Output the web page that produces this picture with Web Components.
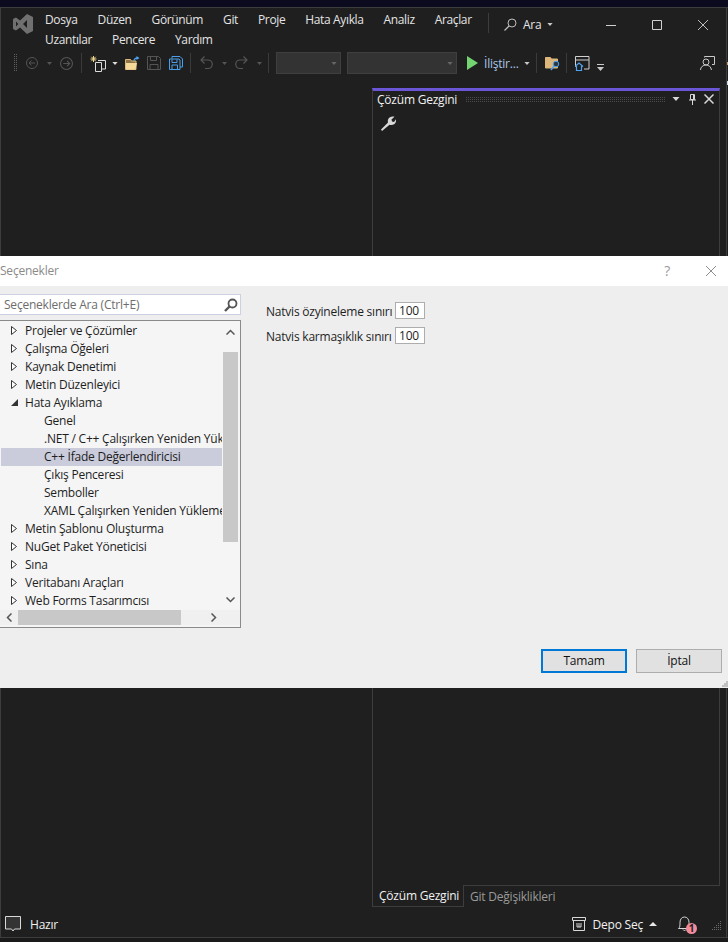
<!DOCTYPE html>
<html lang="tr">
<head>
<meta charset="utf-8">
<title>Seçenekler</title>
<style>
  html, body { margin: 0; padding: 0; background: #1f1f1f; }
  body { width: 728px; height: 942px; overflow: hidden; font: 12px "Open Sans", "Noto Sans", sans-serif; letter-spacing: -0.22px; }
</style>
</head>
<body>
<vs-app>
  <vs-titlebar slot="top"></vs-titlebar>
  <vs-toolbar slot="top"></vs-toolbar>
  <vs-solution-panel slot="main"></vs-solution-panel>
  <vs-statusbar slot="bottom"></vs-statusbar>
  <vs-options-dialog slot="over">
    <vs-tree-item kind="closed">Projeler ve Çözümler</vs-tree-item>
    <vs-tree-item kind="closed">Çalışma Öğeleri</vs-tree-item>
    <vs-tree-item kind="closed">Kaynak Denetimi</vs-tree-item>
    <vs-tree-item kind="closed">Metin Düzenleyici</vs-tree-item>
    <vs-tree-item kind="open">Hata Ayıklama</vs-tree-item>
    <vs-tree-item>Genel</vs-tree-item>
    <vs-tree-item>.NET / C++ Çalışırken Yeniden Yükleme</vs-tree-item>
    <vs-tree-item selected>C++ İfade Değerlendiricisi</vs-tree-item>
    <vs-tree-item>Çıkış Penceresi</vs-tree-item>
    <vs-tree-item>Semboller</vs-tree-item>
    <vs-tree-item>XAML Çalışırken Yeniden Yükleme</vs-tree-item>
    <vs-tree-item kind="closed">Metin Şablonu Oluşturma</vs-tree-item>
    <vs-tree-item kind="closed">NuGet Paket Yöneticisi</vs-tree-item>
    <vs-tree-item kind="closed">Sına</vs-tree-item>
    <vs-tree-item kind="closed">Veritabanı Araçları</vs-tree-item>
    <vs-tree-item kind="closed">Web Forms Tasarımcısı</vs-tree-item>
  </vs-options-dialog>
</vs-app>

<script>
// Small helper so every component gets an open shadow root with its markup
class VsBase extends HTMLElement {
  constructor() {
    super();
    this.attachShadow({ mode: "open" });
    this.shadowRoot.innerHTML = this.render();
  }
  render() {
    return "";
  }
}

const caret = (fill = "#c8c8c8", w = 7, h = 4) =>
  `<svg width="${w}" height="${h}" viewBox="0 0 7 4"><path d="M0 0h7L3.5 4z" fill="${fill}"/></svg>`;

class VsApp extends VsBase {
  render() {
    return `
      <style>
        :host {
          display: flex;
          flex-direction: column;
          position: relative;
          width: 728px;
          height: 942px;
          box-sizing: border-box;
          background: #1f1f1f;
          color: #f1f1f1;
        }
        .strip { height: 7px; background: #0b0a1e; border-bottom: 1px solid #3d3d3d; flex: none; }
        .frame {
          flex: 1;
          min-height: 0;
          display: flex;
          flex-direction: column;
          border-left: 1px solid #3d3d3d;
          border-right: 1px solid #3d3d3d;
          margin-right: 1px;
        }
        .main { flex: 1; min-height: 0; display: flex; justify-content: flex-end; padding-right: 6px; }
        .edge { height: 4px; border-top: 1px solid #3d3d3d; background: #1a1a1a; flex: none; }
        /* scraps of whatever is behind the window, at the very edge */
        .scrap { position: absolute; left: 727px; width: 1px; }
      </style>
      <div class="strip"></div>
      <div class="frame">
        <slot name="top"></slot>
        <div class="main"><slot name="main"></slot></div>
        <slot name="bottom"></slot>
      </div>
      <div class="edge"></div>
      <i class="scrap" style="top:62px;height:3px;background:#c9a070"></i>
      <i class="scrap" style="top:81px;height:4px;background:#cdd8e6"></i>
      <slot name="over"></slot>
    `;
  }
}

class VsTitlebar extends VsBase {
  render() {
    const menu = ["Dosya", "Düzen", "Görünüm", "Git", "Proje", "Hata Ayıkla", "Analiz", "Araçlar",
      "Uzantılar", "Pencere", "Yardım"];
    return `
      <style>
        :host { display: flex; height: 44px; align-items: flex-start; font-size: 12px; }
        .logo { margin: 6px 0 0 12px; width: 20px; height: 20px; flex: none; }
        nav {
          margin: 2px 0 0 12px;
          width: 443px;
          display: flex;
          flex-wrap: wrap;
          column-gap: 20px;
          flex: none;
          letter-spacing: -0.36px;
        }
        nav span { height: 20px; line-height: 20px; color: #e4e4e4; }
        .sep { width: 1px; height: 20px; background: #3d3d3d; margin: 5px 15px 0 0; flex: none; }
        .search { display: flex; align-items: center; height: 20px; margin-top: 6px; color: #e4e4e4; flex: none; }
        .search svg:first-child { margin-right: 6px; }
        .search span { margin-right: 5px; }
        .ctl { margin-left: auto; display: flex; margin-top: 12px; margin-right: 18px; gap: 36px; }
      </style>
      <svg class="logo" viewBox="0 0 20 20"><path fill="#707070" fill-rule="evenodd" d="M14 0l6 3v14l-6 3-7-6.6L3 16.5l-3-1.6v-9.800l3-1.600 4 3.100zM3 7.500v5l2.300-2.500zM14 6l-4 4 4 4z"/></svg>
      <nav>${menu.map((m) => `<span>${m}</span>`).join("")}</nav>
      <div class="sep"></div>
      <div class="search">
        <svg width="13" height="13" viewBox="0 0 13 13" fill="none" stroke="#bdbdbd"><circle cx="8" cy="5" r="4"/><path d="M5 8l-4.500 4.500" stroke-width="1.300"/></svg>
        <span>Ara</span>${caret("#c8c8c8", 6, 3)}
      </div>
      <div class="ctl">
        <svg width="10" height="10" viewBox="0 0 10 10"><path d="M0 5.500h10" stroke="#d0d0d0"/></svg>
        <svg width="10" height="10" viewBox="0 0 10 10"><path d="M.5.500h9v9h-9z" fill="none" stroke="#d0d0d0"/></svg>
        <svg width="10" height="10" viewBox="0 0 10 10"><path d="M0 0l10 10M10 0L0 10" stroke="#d0d0d0" stroke-width=".9"/></svg>
      </div>
    `;
  }
}

class VsToolbar extends VsBase {
  render() {
    const gap = (w) => `<span style="width:${w}px;flex:none"></span>`;
    return `
      <style>
        :host { display: flex; align-items: center; height: 22px; padding-left: 12px; }
        .grip { width: 5px; height: 18px; margin-right: 8px; flex: none;
          background: conic-gradient(#5e5e5e 25%, transparent 0) 0 0 / 2px 2px; }
        .sep { width: 1px; height: 20px; background: #3a3a3a; flex: none; }
        svg { flex: none; display: block; }
        .combo { height: 22px; box-sizing: border-box; background: #333; border: 1px solid #3f3f3f;
          display: flex; align-items: center; justify-content: flex-end; padding-right: 3px; flex: none; }
        .attach { color: #a9c8e8; font-size: 12px; flex: none; width: 35px; white-space: nowrap; }
        .r { margin-left: auto; margin-right: 11px; }
      </style>
      <div class="grip"></div>
      <svg width="12" height="12" viewBox="0 0 12 12" fill="none" stroke="#555"><circle cx="6" cy="6" r="5.500"/><path d="M9 6H3.500M5.500 3.500L3 6l2.500 2.500"/></svg>
      ${gap(9)}${caret("#555", 5, 3)}${gap(8)}
      <svg width="13" height="13" viewBox="0 0 12 12" fill="none" stroke="#555"><circle cx="6" cy="6" r="5.500"/><path d="M3 6h5.500M6.500 3.500L9 6 6.500 8.500"/></svg>
      ${gap(8)}<div class="sep"></div>${gap(8)}
      <svg width="17" height="17" viewBox="0 0 17 17" fill="none"><path d="M8 5.500h7.500v8.500h-3.500M5.500 7.500h6v9h-6z" stroke="#dcdcdc"/><path d="M3.500 1v6M.5 4h6M1.300 1.800l4.400 4.400M5.700 1.800L1.300 6.200" stroke="#f0d78c"/></svg>
      ${gap(5)}${caret("#dcdcdc", 6, 3)}${gap(7)}
      <svg width="15" height="14" viewBox="0 0 15 14"><path d="M.5 3.500h5l1 1.500H11v8.500H.5z" fill="#8f7446" stroke="#dcb67a"/><path d="M1 7h11l-1.500 6.500H1z" fill="#f5d89a"/><path d="M9 5c0-2 1.500-3 3.500-3" stroke="#4fa3f0" fill="none" stroke-width="1.300"/><path d="M11.500 0l3 2-3 2z" fill="#4fa3f0"/></svg>
      ${gap(7)}
      <svg width="14" height="14" viewBox="0 0 14 14" fill="none" stroke="#555"><path d="M.5.500h11l2 2v11H.5z"/><path d="M3.500.5v4h6v-4M3 13.500v-5h8v5"/></svg>
      ${gap(8)}
      <svg width="14" height="14" viewBox="0 0 14 14" fill="none" stroke="#4b9fea"><path d="M3 2.500V.5h8l2.500 2.500v8H11"/><path d="M.5 3H10l1 1v9.500H.5z"/><path d="M3 3.500v3h5v-3M3 13v-4h5.500v4"/></svg>
      ${gap(7)}<div class="sep"></div>${gap(9)}
      <svg width="13" height="14" viewBox="0 0 13 14" fill="none" stroke="#555" stroke-width="1.200"><path d="M4.500.500L1 4l3.500 3.500M1 4h7a4 4 0 0 1 0 8.500H5"/></svg>
      ${gap(9)}${caret("#555", 5, 3)}${gap(8)}
      <svg width="13" height="14" viewBox="0 0 13 14" fill="none" stroke="#555" stroke-width="1.200"><path d="M8.500.500L12 4 8.500 7.500M12 4H5a4 4 0 0 0 0 8.500h3"/></svg>
      ${gap(9)}${caret("#555", 5, 3)}${gap(6)}
      <div class="sep"></div>${gap(7)}
      <div class="combo" style="width:65px">${caret("#666", 6, 3)}</div>
      ${gap(6)}
      <div class="combo" style="width:110px">${caret("#666", 6, 3)}</div>
      ${gap(10)}
      <svg width="11" height="14" viewBox="0 0 11 14"><path d="M0 0l11 7-11 7z" fill="#72d572"/></svg>
      ${gap(6)}<span class="attach">İliştir...</span>
      ${gap(5)}${caret("#c8c8c8", 6, 3)}${gap(6)}
      <div class="sep"></div>${gap(8)}
      <svg width="15" height="15" viewBox="0 0 15 15"><path d="M.5 1.500h5l1 1.500h6v9h-12z" fill="#dcb67a" stroke="#dcb67a"/><circle cx="11" cy="8" r="2.800" fill="#2a3744" stroke="#4fa3f0"/><path d="M9 10l-3 4" stroke="#4fa3f0" stroke-width="1.400"/></svg>
      ${gap(6)}<div class="sep"></div>${gap(8)}
      <svg width="15" height="15" viewBox="0 0 15 15" fill="none"><path d="M.5 11V.5h13.500v12.500H9M.5 4h13.500" stroke="#d0d0d0"/><path d="M0 10.500L4 7l4 3.500M1.500 10v4.500h5V10" stroke="#4fa3f0" stroke-width="1.200"/></svg>
      ${gap(7)}
      <svg width="7" height="7" viewBox="0 0 7 7" style="margin-top:8px"><path d="M0 .5h7" stroke="#c8c8c8"/><path d="M0 3h7L3.500 7z" fill="#c8c8c8"/></svg>
      <svg class="r" width="15" height="15" viewBox="0 0 15 15" fill="none" stroke="#c8c8c8"><circle cx="6" cy="6" r="3"/><path d="M.5 14c0-3 2.500-5 5.500-5s5 2 5.500 5M4.500 1.500V.5h10v8H12"/></svg>
    `;
  }
}

class VsSolutionPanel extends VsBase {
  render() {
    return `
      <style>
        :host { display: flex; flex-direction: column; width: 348px; padding-top: 14px; box-sizing: border-box; color: #f1f1f1; }
        .pane { flex: 1; border: 1px solid #3d3d3d; border-top: 3px solid #6a56d6; box-sizing: border-box; }
        .head { display: flex; align-items: center; height: 16px; padding: 0 5px 0 4px; }
        .dots { flex: 1; height: 5px; margin: 0 7px 0 8px;
          background: conic-gradient(#4b4b4b 25%, transparent 0) 0 0 / 2px 2px; }
        .icons { display: flex; align-items: center; }
        .wrench { display: block; margin: 9px 0 0 8px; }
        .tabs { display: flex; height: 21px; flex: none; }
        .tab { padding: 0 4px; line-height: 21px; height: 21px; box-sizing: border-box; }
        .on { border: 1px solid #3d3d3d; border-top: none; width: 92px; background: #1f1f1f; margin-top: -1px; height: 22px; line-height: 22px; white-space: nowrap; padding-left: 6px; }
        .off { color: #9a9a9a; padding-left: 6px; }
      </style>
      <div class="pane">
        <div class="head">
          <span>Çözüm Gezgini</span>
          <div class="dots"></div>
          <div class="icons">
            ${caret("#d8d8d8", 8, 4)}
            <svg width="7" height="11" viewBox="0 0 7 11" style="margin:0 8px 0 9px"><path d="M1.500.5h4v5h-4zM0 6h7M3.500 6v5M4.500 1v4" stroke="#d8d8d8" fill="none"/></svg>
            <svg width="10" height="10" viewBox="0 0 10 10"><path d="M.5.500l9 9M9.500.5l-9 9" stroke="#d8d8d8" stroke-width="1.500"/></svg>
          </div>
        </div>
        <svg class="wrench" width="15" height="16" viewBox="0 0 15 16"><path d="M1 15l-1-1.500 7-7c-.5-2 0-4 2-5.300C10.500.3 12 .2 13.500.8L10.500 3.500l.5 2 2 .6 2-2.800c.3 2-.3 3.500-1.500 4.700-1.400 1.100-3.200 1.300-5 .8z" fill="#d8d8d8"/></svg>
      </div>
      <div class="tabs">
        <div class="tab on">Çözüm Gezgini</div>
        <div class="tab off">Git Değişiklikleri</div>
      </div>
    `;
  }
}

class VsStatusbar extends VsBase {
  render() {
    return `
      <style>
        :host { display: flex; align-items: center; height: 30px; flex: none; box-sizing: border-box; padding: 4px 5px 0 4px; color: #f1f1f1; }
        .msg { margin-left: 9px; }
        .right { margin-left: auto; display: flex; align-items: center; }
        .bell { position: relative; margin-left: 21px; width: 24px; height: 16px; }
        .badge {
          position: absolute; left: 8px; top: 7px; width: 11px; height: 11px; border-radius: 50%;
          background: #f28b9b; color: #1f1f1f; font: bold 10px/11px "Open Sans", sans-serif; text-align: center;
        }
        .grip { margin-left: 10px; width: 9px; height: 9px; margin-top: 3px; }
      </style>
      <svg width="16" height="16" viewBox="0 0 16 16"><path d="M.5.500h15v12.500H9.500L8 15 6.500 13H.5z" fill="#333" stroke="#d8d8d8"/></svg>
      <span class="msg">Hazır</span>
      <div class="right">
        <svg width="14" height="14" viewBox="0 0 14 14" fill="none" stroke="#d8d8d8" style="margin-right:7px"><path d="M.5.500h13v3H.5zM1.500 3.500v10h11v-10M5 6v4h4V6M7 6v4"/></svg>
        <span>Depo Seç</span>
        <svg width="8" height="4" viewBox="0 0 8 4" style="margin-left:6px"><path d="M0 4h8L4 0z" fill="#e8e8e8"/></svg>
        <div class="bell">
          <svg width="13" height="16" viewBox="0 0 13 16" fill="none" stroke="#d8d8d8"><path d="M.5 12.500c1.500-1 1.500-3 1.500-6C2 3 4 1 6.500 1S11 3 11 6.500c0 3 0 5 1.500 6zM5 13.500c.5 1.300 2.500 1.300 3 0"/></svg>
          <span class="badge">1</span>
        </div>
        <svg class="grip" viewBox="0 0 9 9"><path d="M8 0h1v1H8zM6 2h1v1H6zM8 2h1v1H8zM4 4h1v1H4zM6 4h1v1H6zM8 4h1v1H8zM2 6h1v1H2zM4 6h1v1H4zM6 6h1v1H6zM8 6h1v1H8zM0 8h1v1H0zM2 8h1v1H2zM4 8h1v1H4zM6 8h1v1H6zM8 8h1v1H8z" fill="#6a6a6a"/></svg>
      </div>
    `;
  }
}

class VsTreeItem extends VsBase {
  render() {
    const kind = this.getAttribute("kind");
    const sel = this.hasAttribute("selected");
    let arrow = "";
    if (kind === "closed") {
      arrow = `<svg width="6" height="9" viewBox="0 0 6 9"><path d="M.5.500l5 4-5 4z" fill="#fff" stroke="#333"/></svg>`;
    } else if (kind === "open") {
      arrow = `<svg width="7" height="7" viewBox="0 0 7 7"><path d="M7 0v7H0z" fill="#333"/></svg>`;
    }
    return `
      <style>
        :host { display: block; height: 18px; }
        .row {
          height: 18px;
          box-sizing: border-box;
          padding-bottom: 1px;
          display: flex;
          align-items: center;
          white-space: nowrap;
          overflow: hidden;
          color: #1e1e1e;
          background: ${sel ? "#cacbdb" : "transparent"};
          padding-left: ${kind ? 10 : 43}px;
        }
        .a { width: 14px; display: flex; flex: none; }
      </style>
      <div class="row">${kind ? `<span class="a">${arrow}</span>` : ""}<slot></slot></div>
    `;
  }
}

class VsOptionsDialog extends VsBase {
  render() {
    return `
      <style>
        /* the dialog floats over the IDE window */
        :host {
          position: absolute;
          left: 0;
          top: 256px;
          width: 728px;
          height: 432px;
          display: flex;
          flex-direction: column;
          background: #eeeeee;
          color: #1e1e1e;
          font-size: 12px;
        }
        .title { height: 30px; box-sizing: border-box; padding-bottom: 1px; background: #fff; display: flex; align-items: center; color: #8a8a8a; flex: none; }
        .q { margin-left: auto; margin-right: 36px; font-size: 14px; color: #9a9a9a; }
        .x { margin-right: 12px; }
        .body { flex: 1; min-height: 0; display: flex; padding-top: 8px; }
        .left { width: 241px; flex: none; display: flex; flex-direction: column; gap: 5px; }
        .find {
          height: 21px; box-sizing: border-box; background: #fff; border: 1px solid #ccd0e0; border-left: none;
          display: flex; align-items: center; justify-content: space-between; padding: 0 2px 0 4px; color: #6d6d6d;
        }
        .tree {
          height: 308px; box-sizing: border-box; border: 1px solid #8a8a8a; border-left: none;
          background: #f5f5f5; display: grid; grid-template-columns: 222px 18px; grid-template-rows: 289px 17px;
        }
        .items { padding-top: 1px; padding-left: 1px; overflow: hidden; grid-column: 1; grid-row: 1; }
        .vs { grid-column: 2; grid-row: 1; display: flex; flex-direction: column; align-items: center; justify-content: space-between; padding: 0 2px 0 1px; }
        .vs .btn, .hs .btn { flex: none; display: flex; align-items: center; justify-content: center; }
        .vs .btn { height: 22px; width: 15px; }
        .vs .thumb { width: 15px; height: 190px; background: #c8c8c8; margin-bottom: 42px; flex: none; }
        .hs { grid-column: 1 / 3; grid-row: 2; display: flex; align-items: center; height: 15px; background: #f0f0f0; }
        .hs .btn { width: 18px; height: 15px; }
        .hs .thumb { width: 163px; height: 15px; background: #c8c8c8; }
        .hs .end { margin-left: auto; margin-right: 17px; }
        .content { flex: 1; padding: 8px 0 0 25px; position: relative; }
        .field { display: flex; align-items: center; height: 17px; margin-bottom: 8px; }
        .field label { width: 129px; white-space: nowrap; padding-top: 2px; }
        .field .val { width: 30px; height: 17px; box-sizing: border-box; border: 1px solid #adadad; background: #fff; line-height: 16px; padding-left: 3px; }
        .foot { display: flex; justify-content: flex-end; gap: 9px; padding: 0 6px 15px 0; position: relative; flex: none; }
        .foot button {
          width: 86px; height: 24px; box-sizing: border-box; background: #e1e1e1; border: 1px solid #adadad;
          font: inherit; letter-spacing: inherit; color: #111; padding: 0 0 2px;
        }
        .foot .def { border: 2px solid #0078d7; }
        .rz { position: absolute; right: 0; bottom: 1px; display: block; }
      </style>
      <div class="title">
        <span>Seçenekler</span>
        <span class="q">?</span>
        <svg class="x" width="10" height="10" viewBox="0 0 10 10"><path d="M0 0l10 10M10 0L0 10" stroke="#8f8f8f"/></svg>
      </div>
      <div class="body">
        <div class="left">
          <div class="find">
            <span>Seçeneklerde Ara (Ctrl+E)</span>
            <svg width="14" height="14" viewBox="0 0 14 14" fill="none" stroke="#555"><circle cx="8.500" cy="5.500" r="4" stroke-width="1.800"/><path d="M5.500 8.500L1 13" stroke-width="2.400"/></svg>
          </div>
          <div class="tree">
            <div class="items"><slot></slot></div>
            <div class="vs">
              <div class="btn"><svg width="9" height="6" viewBox="0 0 9 6" fill="none" stroke="#555" stroke-width="1.500"><path d="M.5 5.500l4-4 4 4"/></svg></div>
              <div class="thumb"></div>
              <div class="btn" style="height:14px;margin-bottom:3px"><svg width="9" height="6" viewBox="0 0 9 6" fill="none" stroke="#555" stroke-width="1.500"><path d="M.5.500l4 4 4-4"/></svg></div>
            </div>
            <div class="hs">
              <div class="btn"><svg width="6" height="9" viewBox="0 0 6 9" fill="none" stroke="#555" stroke-width="1.500"><path d="M5.500.500l-4 4 4 4"/></svg></div>
              <div class="thumb"></div>
              <div class="btn end"><svg width="6" height="9" viewBox="0 0 6 9" fill="none" stroke="#555" stroke-width="1.500"><path d="M.5.500l4 4-4 4"/></svg></div>
            </div>
          </div>
        </div>
        <div class="content">
          <div class="field"><label>Natvis özyineleme sınırı</label><div class="val">100</div></div>
          <div class="field"><label>Natvis karmaşıklık sınırı</label><div class="val">100</div></div>
        </div>
      </div>
      <div class="foot">
        <button class="def">Tamam</button>
        <button>İptal</button>
        <svg class="rz" width="6" height="6" viewBox="0 0 6 6"><path d="M4 0h2v2H4zM2 2h2v2H2zM4 2h2v2H4zM0 4h2v2H0zM2 4h2v2H2zM4 4h2v2H4z" fill="#c0c0c0"/></svg>
      </div>
    `;
  }
}

customElements.define("vs-app", VsApp);
customElements.define("vs-titlebar", VsTitlebar);
customElements.define("vs-toolbar", VsToolbar);
customElements.define("vs-solution-panel", VsSolutionPanel);
customElements.define("vs-statusbar", VsStatusbar);
customElements.define("vs-tree-item", VsTreeItem);
customElements.define("vs-options-dialog", VsOptionsDialog);
</script>
</body>
</html>
